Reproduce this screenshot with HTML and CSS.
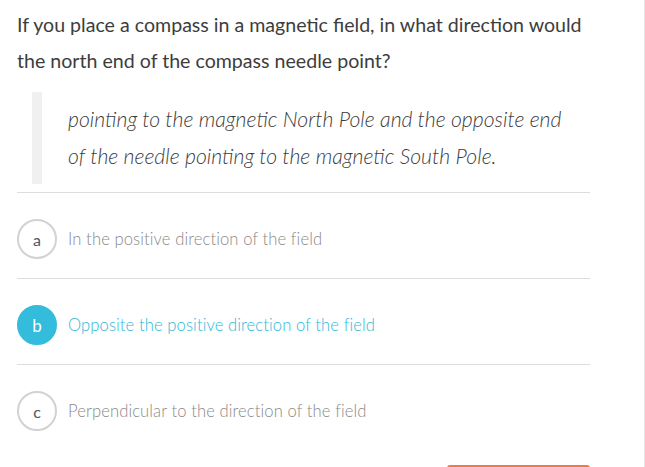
FILE: index.html
```html
<!DOCTYPE html>
<html>
<head>
<meta charset="utf-8">
<link rel="stylesheet" href="styles.css">
</head>
<body>
<div class="page">
  <div class="question">
    <p class="prompt">If you place a compass in a magnetic field, in what direction would the north end of the compass needle point?</p>
    <blockquote class="quote">pointing to the magnetic North Pole and the opposite end of the needle pointing to the magnetic South Pole.</blockquote>
    <ul class="options">
      <li class="option"><span class="letter">a</span><span class="label">In the positive direction of the field</span></li>
      <li class="option selected"><span class="letter">b</span><span class="label">Opposite the positive direction of the field</span></li>
      <li class="option last"><span class="letter">c</span><span class="label">Perpendicular to the direction of the field</span></li>
    </ul>
    <div class="footer"><button class="submit" aria-label="Submit"></button></div>
  </div>
</div>
</body>
</html>
```
FILE: styles.css
```css
html, body {
  margin: 0;
  padding: 0;
  background: #fff;
}
body {
  font-family: Lato, "Noto Sans", sans-serif;
}
.page {
  width: 644px;
  height: 467px;
  border-right: 1px solid #e6e6e6;
  overflow: hidden;
}
.question {
  width: 573px;
  padding-left: 17px;
}
.prompt {
  margin: 7px 0 0 0;
  font-size: 19.6px;
  line-height: 36px;
  color: #3d3d3d;
}
.quote {
  margin: 13px 0 0 15px;
  border-left: 10px solid #f0f0f0;
  padding: 9px 10px 9px 26px;
  font-style: italic;
  font-weight: 300;
  font-size: 21.2px;
  line-height: 37px;
  color: #3d3d3d;
}
.options {
  list-style: none;
  margin: 8px 0 0 0;
  padding: 0;
}
.option {
  display: flex;
  align-items: center;
  gap: 11px;
  border-top: 1px solid #dddddd;
  padding: 26px 0 19px 0;
}
.option.last {
  padding-bottom: 0;
}
.letter {
  box-sizing: border-box;
  width: 40px;
  height: 40px;
  border-radius: 50%;
  border: 2px solid #d2d2d2;
  display: flex;
  align-items: center;
  justify-content: center;
  font-size: 16px;
  color: #555;
  flex: none;
}
.label {
  font-size: 16.6px;
  font-weight: 300;
  color: #8a8a8a;
  letter-spacing: 0.1px;
}
.selected .letter {
  background: #33bcdb;
  border-color: #33bcdb;
  color: #fff;
  font-size: 17px;
}
.selected .label {
  color: #2fb8d8;
}
.footer {
  display: flex;
  justify-content: flex-end;
  margin-top: 34px;
}
.submit {
  width: 143px;
  height: 40px;
  border: none;
  border-radius: 3px;
  background: #f07a45;
}
```
